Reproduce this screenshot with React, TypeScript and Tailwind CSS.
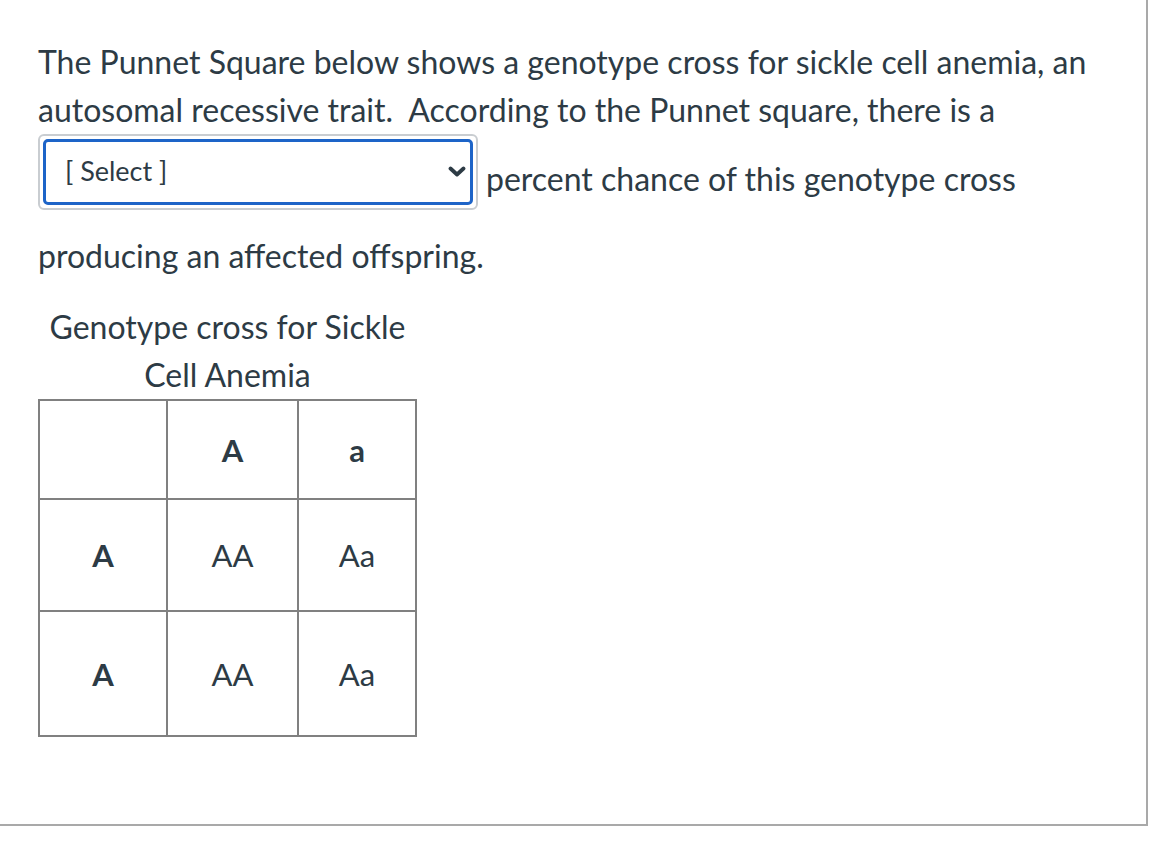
import React from "react";

export default function App() {
  const cell = "bg-white flex items-center justify-center text-[31px]";
  return (
    <div className="w-[1148px] h-[826px] bg-white border-r-2 border-b-2 border-[#a9a9a9] text-[#2d3b45] font-['Lato',sans-serif]">
      <div className="pl-[38px] pt-[38px] text-[32px] leading-[48px]">
        <div>The Punnet Square below shows a genotype cross for sickle cell anemia, an</div>
        <div>autosomal recessive trait.&nbsp; According to the Punnet square, there is a</div>
        <div className="flex items-start">
          <div className="w-[440px] h-[76px] rounded-[6px] border-2 border-[#c9cdd1] p-[3px] bg-white">
            <div className="h-full rounded-[5px] border-[3px] border-[#1d64c8] flex items-center pl-[19px] pr-[4px]">
              <span className="flex-1 text-[27px] leading-[30px] -mt-[2px]">[ Select ]</span>
              <svg width="18" height="12" viewBox="0 0 18 12" className="mb-[1px]">
                <polyline points="2.5,2.5 9,8.5 15.5,2.5" fill="none" stroke="#2d3b45" strokeWidth="3.8" strokeLinecap="round" strokeLinejoin="round" />
              </svg>
            </div>
          </div>
          <div className="ml-[8px] mt-[21px]">percent chance of this genotype cross</div>
        </div>
        <div className="mt-[22px]">producing an affected offspring.</div>
        <div className="mt-[23px] w-[379px] text-center">
          <div>Genotype cross for Sickle</div>
          <div>Cell Anemia</div>
        </div>
        <div className="w-[379px] grid grid-cols-[126px_129px_116px] grid-rows-[97px_110px_123px] gap-[2px] p-[2px] bg-[#808080]">
          <div className={cell}></div>
          <div className={cell + " font-bold"}>A</div>
          <div className={cell + " font-bold"}>a</div>
          <div className={cell + " font-bold"}>A</div>
          <div className={cell}>AA</div>
          <div className={cell}>Aa</div>
          <div className={cell + " font-bold"}>A</div>
          <div className={cell}>AA</div>
          <div className={cell}>Aa</div>
        </div>
      </div>
    </div>
  );
}
